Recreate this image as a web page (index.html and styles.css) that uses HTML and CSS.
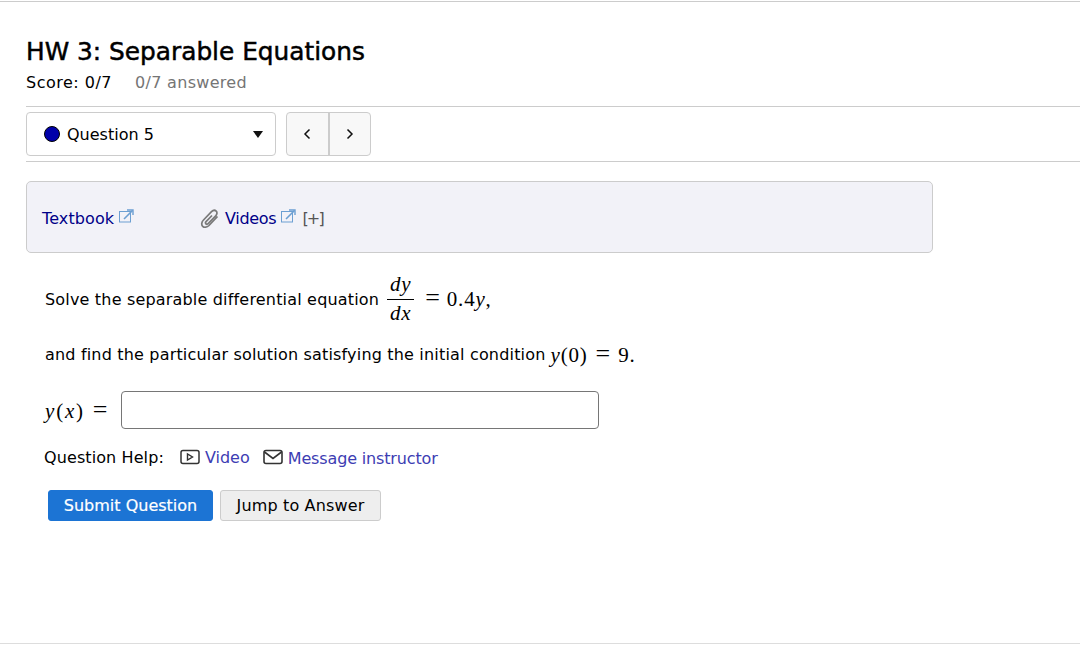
FILE: index.html
```html
<!DOCTYPE html>
<html lang="en">
<head>
<meta charset="utf-8">
<title>HW 3: Separable Equations</title>
<link rel="stylesheet" href="styles.css">
</head>
<body>
<div class="page">
  <header class="head">
    <h1 class="title">HW 3: Separable Equations</h1>
    <div class="score"><span class="got">Score: 0/7</span><span class="answered">0/7 answered</span></div>
  </header>
  <nav class="nav">
    <div class="select">
      <span class="dot"></span><span class="qname">Question 5</span>
      <span class="caret"></span>
    </div>
    <div class="pager">
      <button class="pbtn"><svg width="8" height="12" viewBox="0 0 8 12"><path d="M6.500 1.500 2 6l4.500 4.500" fill="none" stroke="#111" stroke-width="1.500"/></svg></button>
      <button class="pbtn"><svg width="8" height="12" viewBox="0 0 8 12"><path d="M1.500 1.500 6 6l-4.500 4.500" fill="none" stroke="#111" stroke-width="1.500"/></svg></button>
    </div>
  </nav>
  <section class="resources">
    <span class="res res-first"><a class="rlink rbook">Textbook</a>
      <svg class="ext" width="15" height="14" viewBox="0 0 15 14"><rect x="0.500" y="2.500" width="11" height="10.500" fill="#f2f2f8" stroke="#6c9fd2"/><path d="M8 1h6v5" fill="none" stroke="#6c9fd2" stroke-width="1.400"/><path d="M13.500 1.500 5 10" fill="none" stroke="#6c9fd2" stroke-width="1.600"/></svg>
    </span>
    <span class="res">
      <svg class="clip" width="20" height="22" viewBox="0 0 20 22"><path d="M17.500 8.500 9 17.500c-2 2-4.800 2.300-6.300.8s-1.200-4.300.8-6.300l8-8.300c1.400-1.400 3.500-1.700 4.700-.6s.9 3.300-.5 4.700l-7.300 7.600c-.8.800-1.900 1-2.500.4s-.4-1.700.4-2.500L12 7.500" fill="none" stroke="#7a7a7a" stroke-width="1.700"/></svg>
      <a class="rlink rvideos">Videos</a>
      <svg class="ext" width="15" height="14" viewBox="0 0 15 14"><rect x="0.500" y="2.500" width="11" height="10.500" fill="#f2f2f8" stroke="#6c9fd2"/><path d="M8 1h6v5" fill="none" stroke="#6c9fd2" stroke-width="1.400"/><path d="M13.500 1.500 5 10" fill="none" stroke="#6c9fd2" stroke-width="1.600"/></svg>
      <span class="more">[+]</span>
    </span>
  </section>
  <main class="question">
    <p class="line line-one"><span class="prose">Solve the separable differential equation</span>
      <span class="frac"><span class="num"><i>dy</i></span><span class="den"><i>dx</i></span></span>
      <span class="math math-tail"><span class="rel rel-first">=</span>0.4<i>y</i>,</span></p>
    <p class="line line-two"><span class="prose">and find the particular solution satisfying the initial condition</span>
      <span class="math math-end"><i>y</i>(0)<span class="rel">=</span>9.</span></p>
    <div class="answer"><span class="math math-fn"><i>y</i>(<i>x</i>)<span class="rel rel-last">=</span></span><input class="field" type="text" aria-label="answer"></div>
    <div class="help">
      <span class="hlabel">Question Help:</span>
      <svg class="hicon" width="20" height="16" viewBox="0 0 20 16"><rect x="1" y="1.500" width="18" height="13" rx="2" fill="none" stroke="#333" stroke-width="1.500"/><path d="M7.500 5v6L12.500 8z" fill="none" stroke="#333" stroke-width="1.400"/></svg>
      <a class="hlink hvideo">Video</a>
      <svg class="hicon hmail" width="20" height="16" viewBox="0 0 20 16"><rect x="1" y="1.500" width="18" height="13" rx="2" fill="none" stroke="#333" stroke-width="1.600"/><path d="M1.500 3 10 9.500 18.500 3" fill="none" stroke="#333" stroke-width="1.600"/></svg>
      <a class="hlink hmsg">Message instructor</a>
    </div>
    <div class="actions">
      <button class="btn primary">Submit Question</button>
      <button class="btn jump">Jump to Answer</button>
    </div>
  </main>
  <footer class="foot"></footer>
</div>
</body>
</html>
```
FILE: styles.css
```css
* { box-sizing: border-box; }
html, body { margin: 0; padding: 0; background: #fff; }
body { font-family: "DejaVu Sans", sans-serif; font-size: 16px; color: #000; overflow: hidden; }
.page { height: 650px; padding-top: 1px; display: flex; flex-direction: column; }
.head { border-top: 1px solid #ccc; padding: 33px 0 0 26px; height: 105px; }
.title { margin: 0; font-size: 24.800px; font-weight: 400; line-height: 34px; -webkit-text-stroke: 0.5px #000; }
.score { display: flex; gap: 23px; line-height: 24px; margin-top: 2px; }
.got { letter-spacing: 0.5px; }
.answered { color: #757575; letter-spacing: 0.3px; }
.nav { margin-left: 26px; border-top: 1px solid #ccc; border-bottom: 1px solid #ccc; height: 56px; padding-top: 5px; display: flex; gap: 10px; }
.select { width: 250px; height: 44px; border: 1px solid #ccc; border-radius: 4px; display: flex; align-items: center; padding: 1px 7px 0 17px; }
.dot { width: 16px; height: 16px; border-radius: 50%; background: #0000aa; border: 1px solid #000; margin: -1px 7px 0 0; }
.qname { flex: 1; }
.caret { border-left: 5px solid transparent; border-right: 5px solid transparent; border-top: 7px solid #111; margin: 0 5px 0 0; }
.pager { display: flex; width: 85px; height: 44px; border: 1px solid #ccc; border-radius: 4px; background: #f8f8f8; }
.pbtn { flex: 1; border: 0; background: none; padding: 0; display: flex; align-items: center; justify-content: center; }
.pbtn + .pbtn { border-left: 2px solid #ccc; }
.resources { margin: 19px 0 0 26px; width: 907px; height: 72px; background: #f2f2f8; border: 1px solid #ccc; border-radius: 5px; display: flex; align-items: center; padding: 2px 0 0 15px; }
.res { display: flex; align-items: center; }
.res-first { width: 158px; }
.rlink { color: #000088; }
.rbook { letter-spacing: 0.1px; }
.rvideos { letter-spacing: -0.3px; }
.ext { margin-left: 5px; margin-top: -4px; }
.clip { margin-right: 5px; margin-top: 2px; }
.more { color: #555; margin-left: 6px; margin-top: 1px; letter-spacing: -1.800px; }
.question { padding-left: 45px; }
.line { margin: 0; display: flex; align-items: center; }
.prose { letter-spacing: 0.18px; }
.line-one { height: 60px; margin-top: 16px; }
.line-two { height: 30px; margin-top: 10px; }
.math { font-family: "Liberation Serif", serif; font-size: 21px; letter-spacing: 0.8px; }
.math-tail { margin-bottom: 2px; }
.math-end { margin-left: 5px; }
.math-fn { letter-spacing: 1.800px; }
.rel { font-size: 26px; line-height: 1; letter-spacing: 0; margin: 0 8px; }
.rel-first { margin: 0 7px 0 0; }
.rel-last { margin-right: 0; }
.frac { display: inline-flex; flex-direction: column; align-items: center; font-family: "Liberation Serif", serif; font-size: 21px; letter-spacing: 0.8px; margin-left: 8px; margin-right: 11px; }
.num { width: 27px; text-align: center; padding-bottom: 2px; border-bottom: 1px solid #000; line-height: 25px; }
.den { line-height: 26px; }
.answer { display: flex; align-items: center; height: 38px; margin-top: 22px; gap: 13px; }
.field { width: 478px; height: 38px; border: 1px solid #767676; border-radius: 4px; background: #fff; }
.help { display: flex; align-items: center; height: 24px; margin-top: 16px; margin-left: -1px; }
.hlabel { letter-spacing: 0.1px; }
.hicon { margin-left: 16px; }
.hlink { color: #3d3db3; }
.hvideo { margin-left: 5px; }
.hmail { margin-left: 13px; }
.hmsg { margin-left: 5px; margin-top: 2px; letter-spacing: -0.15px; }
.actions { display: flex; gap: 7px; margin: 21px 0 0 3px; }
.btn { font-family: inherit; font-size: 16px; height: 31px; padding: 0; border: 1px solid #ccc; border-radius: 3px; background: #eee; color: #000; }
.primary { width: 165px; background: #1c74d4; border-color: #1c74d4; color: #fff; -webkit-text-stroke: 0.2px #fff; }
.jump { width: 161px; letter-spacing: 0.15px; }
.foot { margin-top: auto; margin-bottom: 6px; border-top: 1px solid #ddd; }
```
